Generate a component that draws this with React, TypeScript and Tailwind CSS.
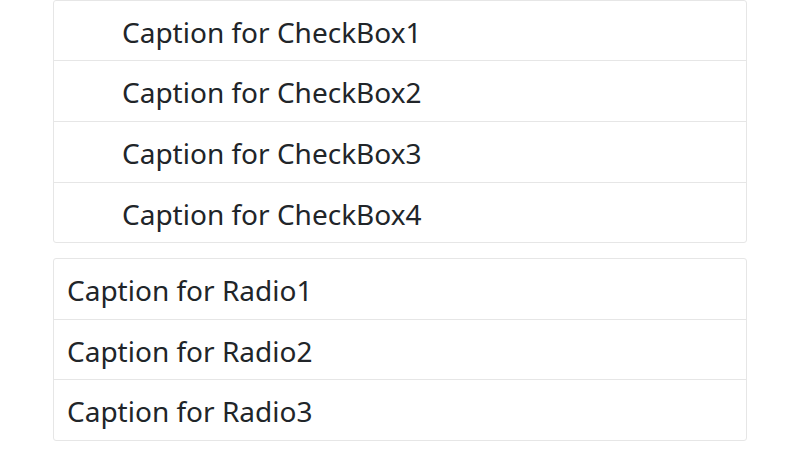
const checkboxes = [
  { label: "CheckBox1", h: "h-[59px]" },
  { label: "CheckBox2", h: "h-[61px]" },
  { label: "CheckBox3", h: "h-[61px]" },
  { label: "CheckBox4", h: "h-[60px]" },
];
const radios = [
  { label: "Radio1", h: "h-[60px]" },
  { label: "Radio2", h: "h-[60px]" },
  { label: "Radio3", h: "h-[61px]" },
];

const App = () => {
  return (
    <div
      className="w-[800px] h-[450px] bg-white overflow-hidden"
      style={{ fontFamily: '"Noto Sans", "Open Sans", sans-serif' }}
    >
      <div className="ml-[53px] w-[694px] flex flex-col gap-[15px]">
        {/* Checkbox list */}
        <ul className="border border-[#e6e6e6] rounded-[3px] flex flex-col">
          {checkboxes.map((c, i) => (
            <li
              key={c.label}
              className={`${c.h} flex items-center pl-[68px] pt-[2px] text-[28px] text-[#212529] ${
                i > 0 ? "border-t border-[#e6e6e6]" : ""
              }`}
            >
              Caption for {c.label}
            </li>
          ))}
        </ul>

        {/* Radio list */}
        <ul className="border border-[#e6e6e6] rounded-[3px] flex flex-col">
          {radios.map((r, i) => (
            <li
              key={r.label}
              className={`${r.h} flex items-center pl-[13px] pt-[2px] text-[28px] text-[#212529] ${
                i > 0 ? "border-t border-[#e6e6e6]" : ""
              }`}
            >
              Caption for {r.label}
            </li>
          ))}
        </ul>
      </div>
    </div>
  );
};

export default App;
